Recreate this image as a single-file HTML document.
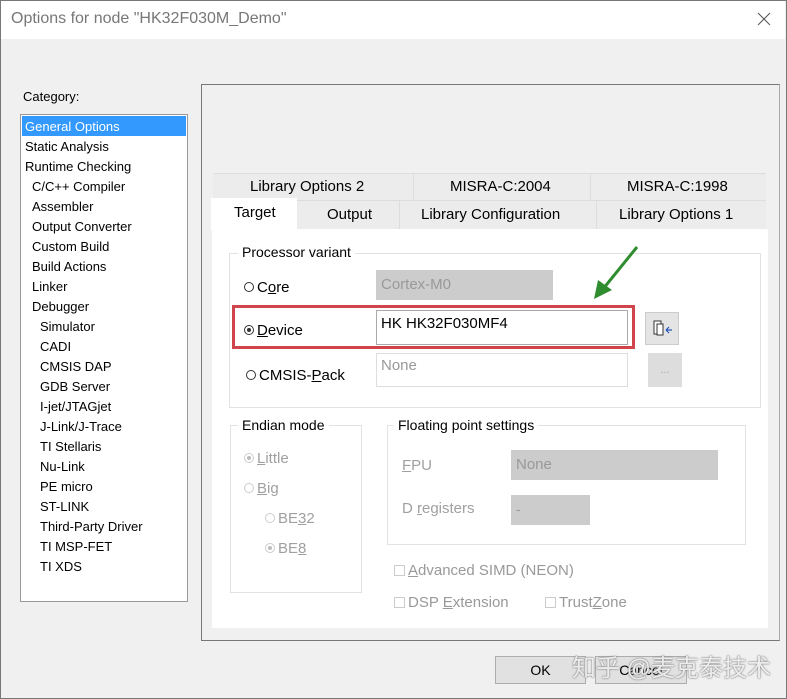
<!DOCTYPE html>
<html><head><meta charset="utf-8"><style>
*{margin:0;padding:0;box-sizing:border-box}
body{width:787px;height:699px;background:#f0f0f0;font-family:"Liberation Sans","Noto Sans CJK SC",sans-serif;position:relative;overflow:hidden;color:#000}
.a{position:absolute;white-space:nowrap}
.t{font-size:14px}
.dis{color:#a0a0a0}
u{text-decoration:underline}
.r{display:inline-block;width:10px;height:10px;border:1px solid #333;border-radius:50%;vertical-align:middle;margin-right:3px;position:relative;top:-1px}
.r.on::after{content:"";position:absolute;left:2px;top:2px;width:4px;height:4px;border-radius:50%;background:#333}
.dis .r{border-color:#ccc}.dis .r.on::after{background:#bbb}
.c{display:inline-block;width:11px;height:11px;border:1px solid #ccc;vertical-align:middle;margin-right:3px;position:relative;top:-1px}
</style></head><body>
<div class="a" style="left:0;top:0;width:787px;height:699px;border:1px solid #777"></div>
<div class="a" style="top:1px;left:1px;width:784px;height:38px;background:#fff"></div>
<div class="a" style="left:11px;top:10px;font-size:16px;color:#777">Options for node "HK32F030M_Demo"</div>
<svg class="a" style="left:757px;top:12px" width="14" height="14"><path d="M1 1L13 13M13 1L1 13" stroke="#555" stroke-width="1"/></svg>

<div class="a t" style="left:23px;top:89px;font-size:13px">Category:</div>
<div class="a" style="left:20px;top:114px;width:168px;height:488px;background:#fff;border:1px solid #999"></div>
<div class="a" style="left:22px;top:116px;width:164px;height:20px;background:#3399ff"></div>
<div class="a" style="left:25px;top:117px;font-size:13px;line-height:20px">
<div style="color:#fff">General Options</div><div>Static Analysis</div><div>Runtime Checking</div>
<div style="padding-left:7px">C/C++ Compiler</div><div style="padding-left:7px">Assembler</div><div style="padding-left:7px">Output Converter</div><div style="padding-left:7px">Custom Build</div><div style="padding-left:7px">Build Actions</div><div style="padding-left:7px">Linker</div><div style="padding-left:7px">Debugger</div>
<div style="padding-left:15px">Simulator</div><div style="padding-left:15px">CADI</div><div style="padding-left:15px">CMSIS DAP</div><div style="padding-left:15px">GDB Server</div><div style="padding-left:15px">I-jet/JTAGjet</div><div style="padding-left:15px">J-Link/J-Trace</div><div style="padding-left:15px">TI Stellaris</div><div style="padding-left:15px">Nu-Link</div><div style="padding-left:15px">PE micro</div><div style="padding-left:15px">ST-LINK</div><div style="padding-left:15px">Third-Party Driver</div><div style="padding-left:15px">TI MSP-FET</div><div style="padding-left:15px">TI XDS</div>
</div>

<div class="a" style="left:201px;top:84px;width:579px;height:557px;border:1px solid #777;border-right-color:#aaa;background:#f0f0f0"></div>
<div class="a" style="left:213px;top:173px;width:553px;height:27px;border-top:1px solid #ddd;background:#ececec"></div>
<div class="a" style="left:413px;top:173px;width:1px;height:27px;background:#ddd"></div>
<div class="a" style="left:590px;top:173px;width:1px;height:27px;background:#ddd"></div>
<div class="a t" style="left:250px;top:178px;font-size:15px">Library Options 2</div>
<div class="a t" style="left:450px;top:178px;font-size:15px">MISRA-C:2004</div>
<div class="a t" style="left:627px;top:178px;font-size:15px">MISRA-C:1998</div>
<div class="a" style="left:213px;top:200px;width:553px;height:29px;background:#ececec;border-top:1px solid #ddd"></div>
<div class="a" style="left:296px;top:200px;width:1px;height:29px;background:#ddd"></div>
<div class="a" style="left:399px;top:200px;width:1px;height:29px;background:#ddd"></div>
<div class="a" style="left:596px;top:200px;width:1px;height:29px;background:#ddd"></div>
<div class="a" style="left:211px;top:198px;width:86px;height:32px;background:#fff"></div>
<div class="a t" style="left:234px;top:204px;font-size:15px">Target</div>
<div class="a t" style="left:327px;top:206px;font-size:15px">Output</div>
<div class="a t" style="left:421px;top:206px;font-size:15px">Library Configuration</div>
<div class="a t" style="left:619px;top:206px;font-size:15px">Library Options 1</div>
<div class="a" style="left:212px;top:229px;width:556px;height:399px;background:#fff"></div>

<div class="a" style="left:229px;top:253px;width:532px;height:155px;border:1px solid #e2e2e2"></div>
<div class="a t" style="left:238px;top:244px;background:#fff;padding:0 4px;font-size:14px">Processor variant</div>
<div class="a t" style="left:244px;top:279px;font-size:15px"><span class="r"></span>C<u>o</u>re</div>
<div class="a" style="left:376px;top:270px;width:177px;height:30px;background:#ccc"></div>
<div class="a dis" style="left:381px;top:276px;font-size:15px;color:#999">Cortex-M0</div>
<div class="a" style="left:232px;top:305px;width:403px;height:44px;border:3px solid #d0454c"></div>
<div class="a t" style="left:244px;top:322px;font-size:15px"><span class="r on"></span><u>D</u>evice</div>
<div class="a" style="left:376px;top:310px;width:252px;height:35px;border:1px solid #aaa;background:#fff"></div>
<div class="a" style="left:381px;top:315px;font-size:15px">HK HK32F030MF4</div>
<div class="a" style="left:645px;top:312px;width:34px;height:33px;background:#e4e4e4;border:1px solid #ccc"></div>
<svg class="a" style="left:653px;top:320px" width="20" height="17"><rect x="1" y="1" width="7" height="13" fill="#fff" stroke="#333"/><rect x="4" y="4" width="6" height="11" fill="#fff" stroke="#333"/><path d="M13 10H19M13 10L16 7M13 10L16 13" stroke="#2255bb" stroke-width="1.2" fill="none"/></svg>
<div class="a t" style="left:246px;top:367px;font-size:15px"><span class="r"></span>CMSIS-<u>P</u>ack</div>
<div class="a" style="left:376px;top:353px;width:252px;height:34px;border:1px solid #ddd;background:#fff"></div>
<div class="a" style="left:381px;top:357px;font-size:15px;color:#999">None</div>
<div class="a" style="left:648px;top:353px;width:34px;height:34px;background:#ddd;color:#aaa;font-size:11px;text-align:center;line-height:34px">...</div>
<svg class="a" style="left:590px;top:245px" width="50" height="58"><path d="M47 2L13 44" stroke="#2f8c2f" stroke-width="3"/><path d="M4 54L8 35L22 45Z" fill="#2f8c2f"/></svg>

<div class="a" style="left:230px;top:425px;width:132px;height:168px;border:1px solid #e2e2e2"></div>
<div class="a t" style="left:238px;top:417px;background:#fff;padding:0 4px;font-size:14px">Endian mode</div>
<div class="a dis" style="left:244px;top:450px;font-size:15px"><span class="r on"></span><u>L</u>ittle</div>
<div class="a dis" style="left:244px;top:480px;font-size:15px"><span class="r"></span><u>B</u>ig</div>
<div class="a dis" style="left:265px;top:510px;font-size:15px"><span class="r"></span>BE<u>3</u>2</div>
<div class="a dis" style="left:265px;top:540px;font-size:15px"><span class="r on"></span>BE<u>8</u></div>

<div class="a" style="left:387px;top:425px;width:359px;height:120px;border:1px solid #e2e2e2"></div>
<div class="a t" style="left:394px;top:417px;background:#fff;padding:0 4px;font-size:14px">Floating point settings</div>
<div class="a dis" style="left:402px;top:457px;font-size:15px"><u>F</u>PU</div>
<div class="a" style="left:511px;top:450px;width:207px;height:30px;background:#ccc"></div>
<div class="a" style="left:516px;top:456px;font-size:15px;color:#999">None</div>
<div class="a dis" style="left:402px;top:500px;font-size:15px">D <u>r</u>egisters</div>
<div class="a" style="left:511px;top:495px;width:79px;height:30px;background:#ccc;color:#999;padding:6px 5px;font-size:14px">-</div>
<div class="a dis" style="left:394px;top:562px;font-size:15px;color:#999"><span class="c"></span><u>A</u>dvanced SIMD (NEON)</div>
<div class="a dis" style="left:394px;top:594px;font-size:15px;color:#999"><span class="c"></span>DSP <u>E</u>xtension</div>
<div class="a dis" style="left:545px;top:594px;font-size:15px;color:#999"><span class="c"></span>Trust<u>Z</u>one</div>

<div class="a" style="left:495px;top:656px;width:91px;height:28px;border:1px solid #adadad;background:#e1e1e1;text-align:center;line-height:26px;font-size:14px">OK</div>
<div class="a" style="left:595px;top:656px;width:92px;height:28px;border:1px solid #adadad;background:#e1e1e1;text-align:center;line-height:26px;font-size:14px">Cancel</div>
<div class="a" style="left:572px;top:648px;font-size:24px;color:rgba(255,255,255,0.85);text-shadow:0 0 2px #888,0 0 1px #666">知乎 @麦克泰技术</div>
</body></html>
